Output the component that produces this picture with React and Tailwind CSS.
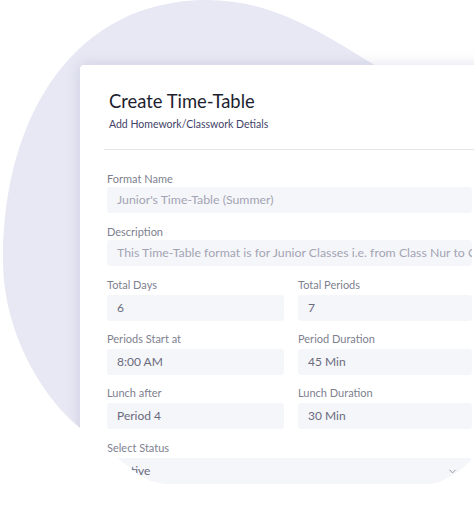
import { ChevronDown } from 'lucide-react';

const FONT = { fontFamily: 'Lato, "Open Sans", sans-serif' };

function Field({ label, value, muted, tight }) {
  return (
    <div>
      <label className={`block text-[11px] leading-[14px] text-[#7e7f90] ${tight ? 'mb-[1px]' : 'mb-[3px]'}`}>
        {label}
      </label>
      <div className="h-[26px] rounded-[3px] bg-[#f5f6fa] pl-[10px] flex items-center overflow-hidden whitespace-nowrap">
        <span className={muted ? 'text-[12.3px] text-[#a3a4b3]' : 'text-[12px] text-[#6a6b7c]'}>
          {value}
        </span>
      </div>
    </div>
  );
}

export default function App() {
  return (
    <div className="relative w-[474px] h-[514px] overflow-hidden bg-white" style={FONT}>
      {/* background blob */}
      <svg className="absolute inset-0" width="474" height="514" viewBox="0 0 474 514">
        <path
          d="M207 0 C270 0 318 30 376 66 L430 100 L430 470 L80 428 C40 395 3 330 3 260 C3 115 75 0 207 0 Z"
          fill="#e7e8f3"
        />
      </svg>

      <div
        className="absolute left-[80px] top-[65px] w-[440px] h-[430px] [clip-path:polygon(-30px_-30px,470px_-30px,470px_365px,420px_365px,394px_393px,378px_407px,360px_417px,340px_421px,220px_423px,95px_421px,70px_416px,55px_407px,40px_395px,20px_380px,0px_363px,-30px_330px)]"
      >
        <div className="h-full bg-white rounded-tl-[4px] shadow-[0_0_14px_rgba(110,114,165,0.22)] pl-[27px] pt-[26px]">
          <div className="pl-[2px]">
            <h1 className="text-[18.4px] leading-[21px] text-[#1d1e2f]">Create Time-Table</h1>
            <p className="mt-[5px] text-[10.5px] leading-[14px] text-[#3f4268]">
              Add Homework/Classwork Detials
            </p>
          </div>

          <div className="mt-[18px] -ml-[3px] border-t border-[#e6e6ea]" />

          <div className="w-[365px] mt-[22px] flex flex-col gap-[12px]">
            <Field label="Format Name" value="Junior's Time-Table (Summer)" muted tight />
            <Field
              label="Description"
              value="This Time-Table format is for Junior Classes i.e. from Class Nur to Class 5th"
              muted
              tight
            />
            <div className="grid grid-cols-[177px_174px] gap-x-[14px] gap-y-[11px]">
              <Field label="Total Days" value="6" />
              <Field label="Total Periods" value="7" />
              <Field label="Periods Start at" value="8:00 AM" />
              <Field label="Period Duration" value="45 Min" />
              <Field label="Lunch after" value="Period 4" />
              <Field label="Lunch Duration" value="30 Min" />
            </div>
            <div>
              <label className="block text-[11px] leading-[14px] text-[#7e7f90] mb-[3px]">Select Status</label>
              <div className="h-[26px] rounded-[3px] bg-[#f5f6fa] pl-[10px] pr-[14px] flex items-center justify-between">
                <span className="text-[12px] text-[#6a6b7c]">Active</span>
                <ChevronDown size={11} strokeWidth={2} className="text-[#8a8b9b]" />
              </div>
            </div>
          </div>
        </div>
      </div>
    </div>
  );
}
